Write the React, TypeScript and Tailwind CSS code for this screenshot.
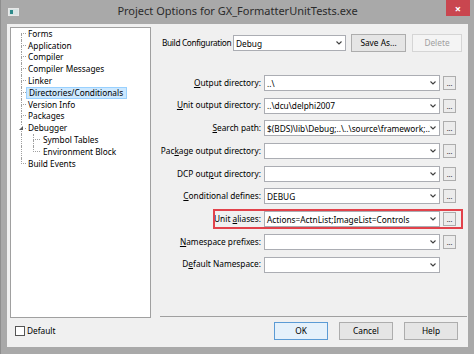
import React from 'react'

const font = "font-['Noto_Sans',sans-serif]"

interface TreeItem {
  label: string
  sel?: boolean
  exp?: boolean
  child?: boolean
  childLast?: boolean
  last?: boolean
  first?: boolean
}

const tree: TreeItem[] = [
  { label: 'Forms', first: true },
  { label: 'Application' },
  { label: 'Compiler' },
  { label: 'Compiler Messages' },
  { label: 'Linker' },
  { label: 'Directories/Conditionals', sel: true },
  { label: 'Version Info' },
  { label: 'Packages' },
  { label: 'Debugger', exp: true },
  { label: 'Symbol Tables', child: true },
  { label: 'Environment Block', child: true, childLast: true },
  { label: 'Build Events', last: true },
]

function Connector({ w, first, last }: { w: string; first?: boolean; last?: boolean }) {
  return (
    <div className={`flex flex-col ${w}`}>
      <div className={`h-1/2 border-b border-dotted border-[#a0a0a0] ${first ? '' : 'border-l'}`} />
      <div className={`h-1/2 border-dotted border-[#a0a0a0] ${last ? '' : 'border-l'}`} />
    </div>
  )
}

function TreeRow({ item }: { item: TreeItem }) {
  return (
    <div className="flex h-[11.8px] items-stretch">
      {item.child ? (
        <>
          <div className="w-[12px] border-l border-dotted border-[#a0a0a0]" />
          <Connector w="w-[7px]" last={item.childLast} />
        </>
      ) : item.exp ? (
        <div className="flex w-[5px] flex-col">
          <div className="h-[3px] border-l border-dotted border-[#a0a0a0]" />
          <svg className="-ml-[3px] h-[6px] w-[8px]" viewBox="0 0 8 6">
            <polygon points="1,5 5,5 5,1" fill="#595959" />
            <rect x="7" y="3" width="1" height="1" fill="#a0a0a0" />
          </svg>
          <div className="flex-1 border-l border-dotted border-[#a0a0a0]" />
        </div>
      ) : (
        <Connector w="w-[5px]" first={item.first} last={item.last} />
      )}
      <span
        className={`flex items-center whitespace-nowrap leading-none ${
          item.child ? 'pl-[3px]' : 'pl-[2px]'
        } ${item.sel ? 'border border-[#99d1ff] bg-[#cce8ff] pr-[3px] pl-[1px]' : 'pr-[4px]'}`}
      >
        {item.label}
      </span>
    </div>
  )
}

function Combo({ value, w }: { value: string; w: string }) {
  return (
    <div className={`flex h-[16px] items-center border border-[#abadb3] bg-white ${w}`}>
      <span className="flex-1 overflow-hidden whitespace-nowrap pl-[2px] leading-[13px]">{value}</span>
      <svg className="mr-[3px] h-[4px] w-[6px] shrink-0" viewBox="0 0 6 4">
        <polyline points="0.5,0.5 3,3 5.5,0.5" fill="none" stroke="#404040" strokeWidth="1.1" />
      </svg>
    </div>
  )
}

function Dots() {
  return (
    <div className="ml-[3px] flex h-[14px] w-[13px] items-end justify-center border border-[#adadad] bg-[#ececec] pb-[2px] text-[7px] leading-none text-[#333]">
      ...
    </div>
  )
}

interface Field {
  pre: string
  u: string
  post: string
  value: string
  dots: boolean
  mark?: boolean
}

const fields: Field[] = [
  { pre: '', u: 'O', post: 'utput directory:', value: '..\\', dots: true },
  { pre: '', u: 'U', post: 'nit output directory:', value: '..\\dcu\\delphi2007', dots: true },
  { pre: '', u: 'S', post: 'earch path:', value: '$(BDS)\\lib\\Debug;..\\..\\source\\framework;..\\', dots: true },
  { pre: 'Pac', u: 'k', post: 'age output directory:', value: '', dots: true },
  { pre: 'DCP out', u: 'p', post: 'ut directory:', value: '', dots: true },
  { pre: '', u: 'C', post: 'onditional defines:', value: 'DEBUG', dots: true },
  { pre: 'Unit ', u: 'a', post: 'liases:', value: 'Actions=ActnList;ImageList=Controls', dots: true, mark: true },
  { pre: '', u: 'N', post: 'amespace prefixes:', value: '', dots: true },
  { pre: 'D', u: 'e', post: 'fault Namespace:', value: '', dots: false },
]

function Button({ label, focus, disabled, w }: { label: string; focus?: boolean; disabled?: boolean; w: string }) {
  return (
    <div
      className={`flex h-[18px] items-center justify-center border ${w} ${
        focus
          ? 'border-[#5b9bd5] bg-[#e5f1fb]'
          : disabled
          ? 'border-[#d5d5d5] bg-[#f4f4f4] text-[#a0a0a0]'
          : 'border-[#adadad] bg-[#e5e5e5]'
      }`}
    >
      {label}
    </div>
  )
}

export default function App() {
  return (
    <div className={`flex h-[354px] w-[474px] flex-col border-l border-[#8e8e8e] bg-[#a9a9a9] text-[8.3px] text-black ${font}`}>
      {/* title bar */}
      <div className="flex h-[24px] items-start">
        <div className="flex w-[60px] pl-[7px] pt-[8px]">
          <div className="flex h-[8px] w-[11px] items-center border border-[#e8e8e8] bg-[#d8e4e4] pl-[1px]">
            <div className="h-[4px] w-[3px] bg-[#2d8a8a]" />
          </div>
        </div>
        <div className="flex-1 pt-[4px] text-center text-[11px] leading-[14px] text-[#2b2b2b]">
          Project Options for GX_FormatterUnitTests.exe
        </div>
        <div className="flex w-[60px] justify-end pr-[4px]">
          <div className="flex h-[16px] w-[24px] items-center justify-center bg-[#c9464f] text-[11px] font-bold leading-none text-white">
            ×
          </div>
        </div>
      </div>

      {/* client */}
      <div className="mx-[6px] mb-[7px] flex flex-1 bg-[#f0f0f0]">
        {/* left column */}
        <div className="flex w-[148px] flex-col">
          <div className="ml-[3px] mt-[3px] h-[291px] w-[141px] border border-[#a0a0a0] bg-white pl-[10px]">
            {tree.map(item => (
              <TreeRow key={item.label} item={item} />
            ))}
          </div>
          <div className="ml-[8px] mt-[8px] flex items-center">
            <div className="h-[10px] w-[10px] border border-[#555] bg-white" />
            <span className="ml-[2px] leading-none">Default</span>
          </div>
        </div>

        {/* right column */}
        <div className="flex flex-1 flex-col">
          <div className="mt-[10px] flex items-center pl-[7px]">
            <span className="w-[71px] whitespace-nowrap tracking-[-0.35px]">Build Configuration</span>
            <Combo value="Debug" w="w-[113px]" />
            <div className="ml-[5px]">
              <Button label="Save As..." w="w-[55px]" />
            </div>
            <div className="ml-[6px]">
              <Button label="Delete" w="w-[50px]" disabled />
            </div>
          </div>

          <div className="mt-[23px] flex flex-col gap-[6.7px]">
            {fields.map(f => (
              <div key={f.post} className="relative flex h-[16px] items-center">
                <span className="w-[106px] whitespace-nowrap text-right">
                  {f.pre}
                  <span className="underline">{f.u}</span>
                  {f.post}
                </span>
                <div className="ml-[3px]">
                  <Combo value={f.value} w="w-[176px]" />
                </div>
                {f.dots && <Dots />}
                {f.mark && (
                  <div className="absolute -bottom-[2px] -top-[2px] left-[58px] right-[5px] border-2 border-[#e2424b]" />
                )}
              </div>
            ))}
          </div>

          <div className="mb-[5px] ml-[5px] mr-[1px] mt-auto border-t border-[#a0a0a0]" />
          <div className="mb-[7px] flex justify-end gap-[11px] pr-[10px]">
            <Button label="OK" focus w="w-[54px]" />
            <Button label="Cancel" w="w-[54px]" />
            <Button label="Help" w="w-[54px]" />
          </div>
        </div>
      </div>
    </div>
  )
}
